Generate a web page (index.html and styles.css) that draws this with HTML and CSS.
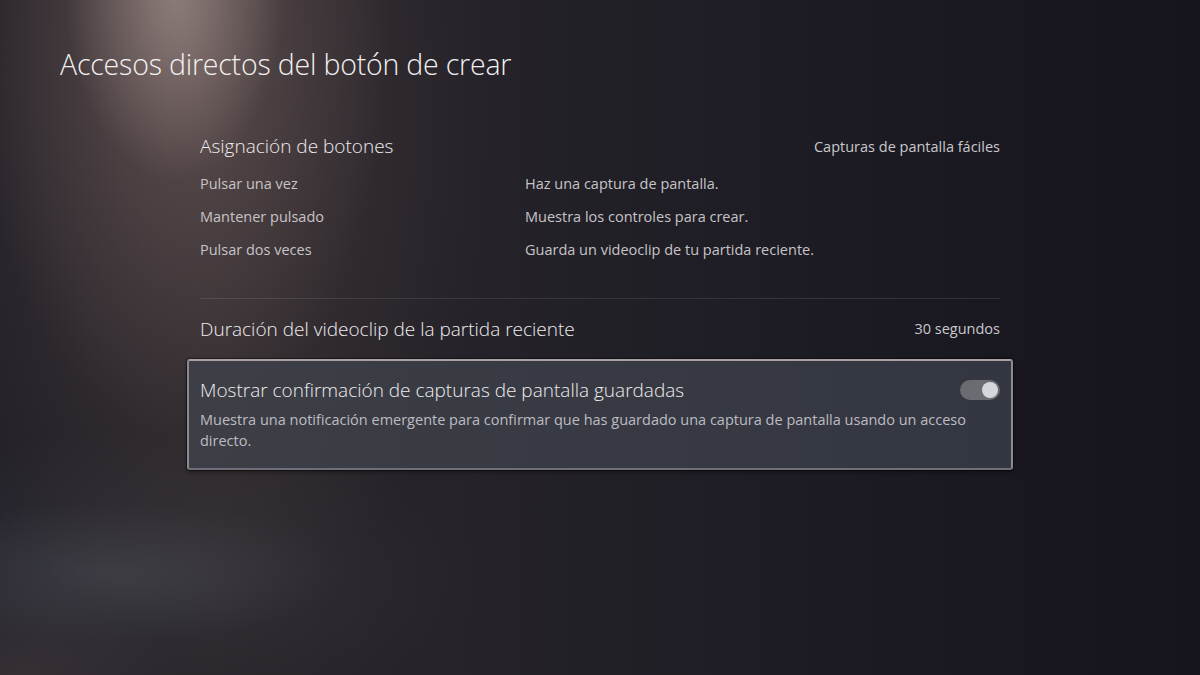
FILE: index.html
```html
<!DOCTYPE html>
<html lang="es">

<head>
    <meta charset="UTF-8">
    <meta name="viewport" content="width=device-width, initial-scale=1.0">
    <title>Accesos directos del botón de crear</title>
    <link rel="stylesheet" href="styles.css">
</head>

<body>
<div class="screen">
    <header>
        <h1>Accesos directos del botón de crear</h1>
    </header>

    <main class="settings">
        <section class="group">
            <div class="row-head">
                <h2>Asignación de botones</h2>
                <span class="value">Capturas de pantalla fáciles</span>
            </div>
            <div class="mapping">
                <span>Pulsar una vez</span>
                <span>Haz una captura de pantalla.</span>
                <span>Mantener pulsado</span>
                <span>Muestra los controles para crear.</span>
                <span>Pulsar dos veces</span>
                <span>Guarda un videoclip de tu partida reciente.</span>
            </div>
        </section>

        <div class="row-head single">
            <h2>Duración del videoclip de la partida reciente</h2>
            <span class="value">30 segundos</span>
        </div>

        <div class="option focused">
            <div class="row-head">
                <h2>Mostrar confirmación de capturas de pantalla guardadas</h2>
                <span class="toggle on"><span class="knob"></span></span>
            </div>
            <p>Muestra una notificación emergente para confirmar que has guardado una captura de pantalla usando un acceso directo.</p>
        </div>
    </main>
</div>
</body>

</html>
```

FILE: styles.css
```css
body {
    margin: 0;
    padding: 0;
    font-family: 'Open Sans', 'Liberation Sans', sans-serif;
    background-color: #1b1a22;
    overflow: hidden;
}

/* dark backdrop with a spotlight from the top left and a haze near the floor */
.screen {
    width: 1200px;
    height: 675px;
    box-sizing: border-box;
    background:
        radial-gradient(ellipse 110px 190px at 175px -10px, rgba(185, 165, 160, 0.55), rgba(185, 165, 160, 0) 100%),
        radial-gradient(ellipse 210px 420px at 182px 20px, rgba(130, 108, 104, 0.45), rgba(130, 108, 104, 0) 100%),
        radial-gradient(ellipse 300px 520px at 190px 120px, rgba(90, 74, 74, 0.45), rgba(90, 74, 74, 0) 100%),
        radial-gradient(ellipse 240px 70px at 110px 572px, rgba(95, 99, 108, 0.25), rgba(95, 99, 108, 0) 100%),
        radial-gradient(ellipse 360px 150px at 120px 580px, rgba(70, 72, 80, 0.35), rgba(70, 72, 80, 0) 100%),
        radial-gradient(ellipse 160px 90px at 20px 675px, rgba(70, 56, 60, 0.5), rgba(70, 56, 60, 0) 100%),
        linear-gradient(90deg, #211f27 0%, #29252a 18%, #252229 40%, #1c1b23 70%, #16151d 100%);
    padding: 45px 60px 0;
}

header h1 {
    margin: 0;
    font-size: 28.5px;
    font-weight: 300;
    color: #f2f0f0;
    letter-spacing: -0.2px;
}

.settings {
    width: 800px;
    margin: 50px 0 0 140px;
}

.row-head {
    display: flex;
    justify-content: space-between;
    align-items: center;
}

h2 {
    margin: 0;
    font-size: 19px;
    font-weight: 300;
    color: #eeecee;
}

.value {
    font-size: 14.5px;
    color: #c9c8cc;
}

.group {
    padding-bottom: 39px;
    border-bottom: 1px solid rgba(255, 255, 255, 0.1);
}

.mapping {
    display: grid;
    grid-template-columns: 325px 1fr;
    row-gap: 14px;
    margin-top: 15px;
    font-size: 14.5px;
    color: #c6c4c7;
}

.single {
    height: 60px;
    padding-bottom: 1px;
    box-sizing: border-box;
}

.option {
    margin: 0 -13px;
    padding: 16px 11px 17px;
    border: 2px solid #8a8a92;
    border-color: #aaa1a5 #8c8c94 #6e6f78 #8a8a92;
    border-radius: 3px;
    background: linear-gradient(90deg, rgba(62, 64, 72, 0.9), rgba(54, 58, 68, 0.9));
    box-shadow: 0 0 0 1px rgba(0, 0, 0, 0.4), 0 2px 4px rgba(0, 0, 0, 0.4);
}

.option p {
    margin: 6px 0 0;
    font-size: 14.5px;
    line-height: 21px;
    color: #bdbcc2;
}

.toggle {
    width: 40px;
    height: 20px;
    border-radius: 10px;
    background-color: #6a6c72;
    display: flex;
    align-items: center;
    justify-content: flex-end;
    padding: 0 2px;
    box-sizing: border-box;
}

.knob {
    width: 16px;
    height: 16px;
    border-radius: 50%;
    background-color: #d5d7db;
}
```
